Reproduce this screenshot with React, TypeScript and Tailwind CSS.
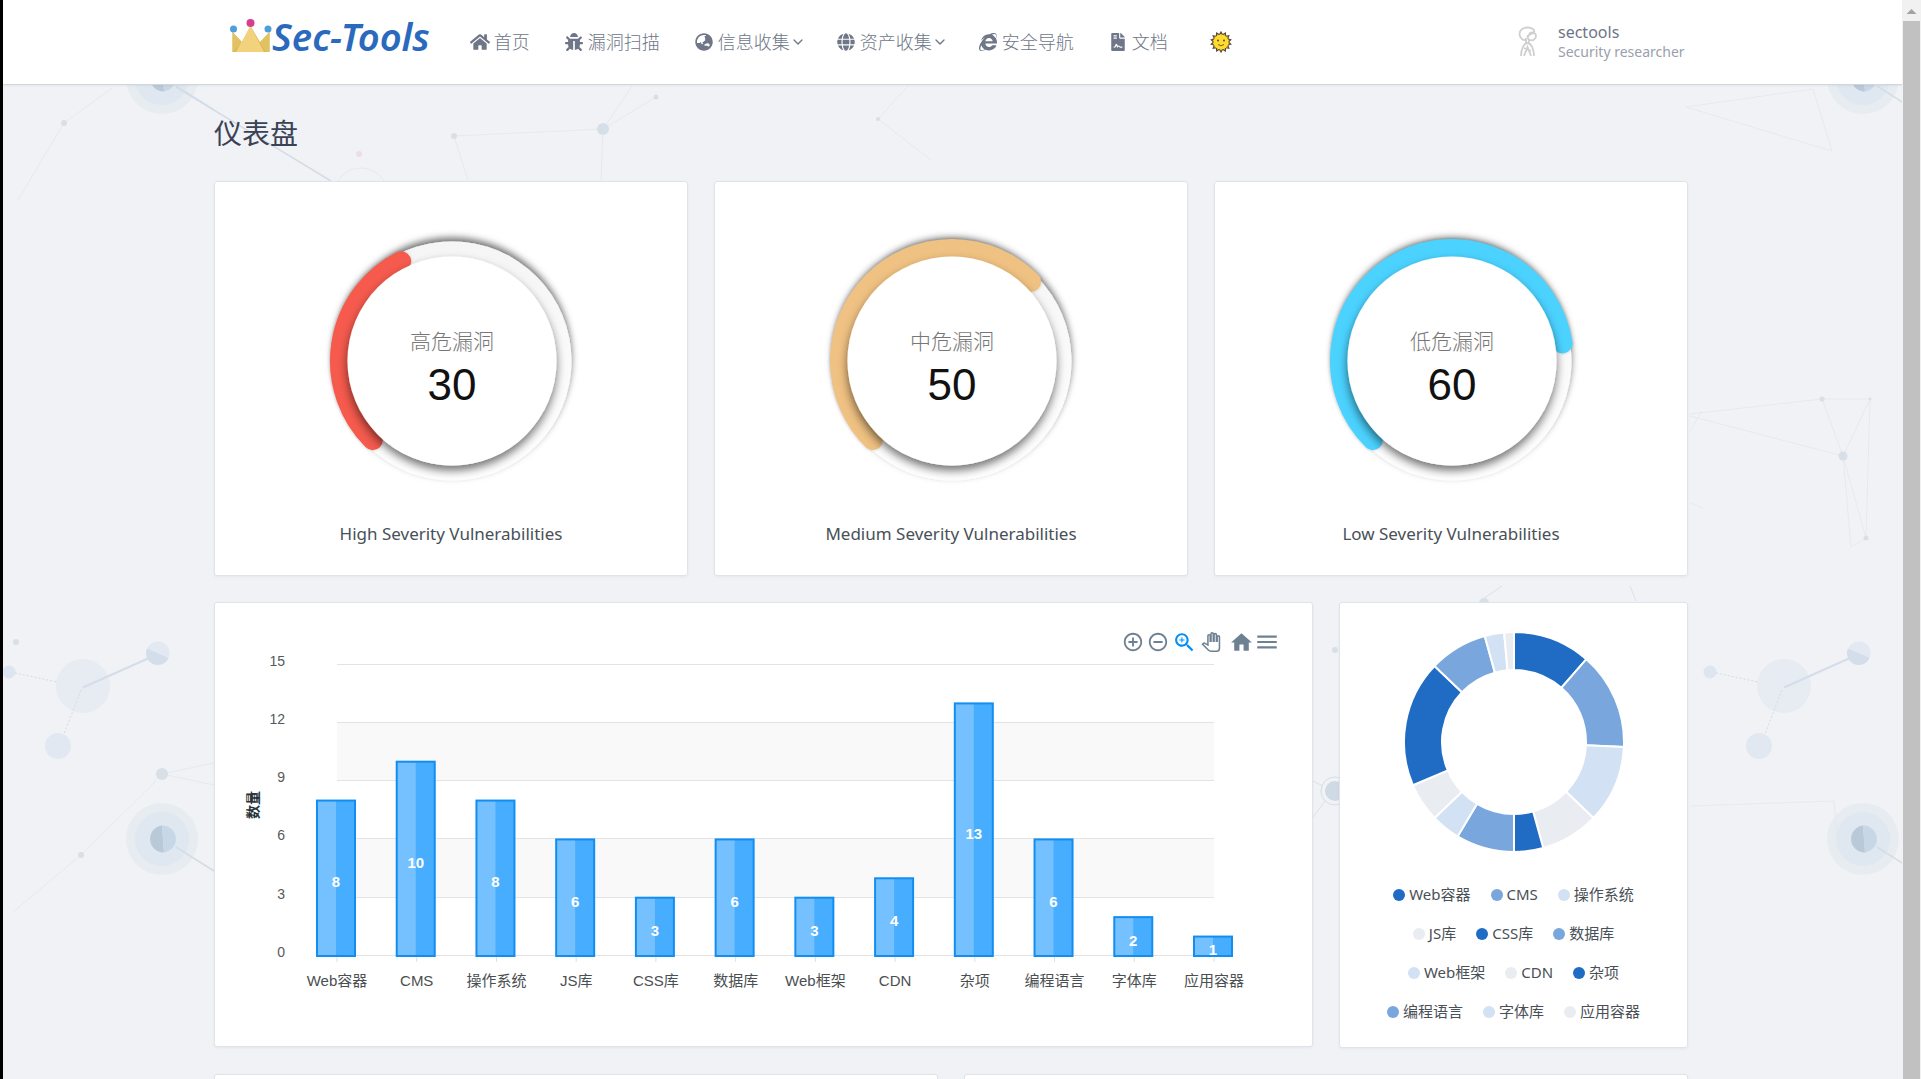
import type { ReactNode } from "react";
import { FaBug, FaFileContract, FaGlobe, FaGlobeAsia, FaHome, FaInternetExplorer } from "react-icons/fa";
import { FiChevronDown } from "react-icons/fi";

const stats = [
  { id: "high", title: "高危漏洞", value: 30, label: "High Severity Vulnerabilities", color: "#f55a4e" },
  { id: "medium", title: "中危漏洞", value: 50, label: "Medium Severity Vulnerabilities", color: "#efc182" },
  { id: "low", title: "低危漏洞", value: 60, label: "Low Severity Vulnerabilities", color: "#4bd2ff" },
];

const components = [
  { name: "Web容器", count: 8 },
  { name: "CMS", count: 10 },
  { name: "操作系统", count: 8 },
  { name: "JS库", count: 6 },
  { name: "CSS库", count: 3 },
  { name: "数据库", count: 6 },
  { name: "Web框架", count: 3 },
  { name: "CDN", count: 4 },
  { name: "杂项", count: 13 },
  { name: "编程语言", count: 6 },
  { name: "字体库", count: 2 },
  { name: "应用容器", count: 1 },
];

const palette = ["#206bc4", "#79a6dc", "#d2e1f3", "#e9ecf1"];

const navItems = [
  { icon: FaHome, label: "首页" },
  { icon: FaBug, label: "漏洞扫描" },
  { icon: FaGlobeAsia, label: "信息收集", menu: true },
  { icon: FaGlobe, label: "资产收集", menu: true },
  { icon: FaInternetExplorer, label: "安全导航" },
  { icon: FaFileContract, label: "文档" },
];

const polar = (cx: number, cy: number, r: number, deg: number) => {
  const a = (deg * Math.PI) / 180;
  return `${(cx + r * Math.sin(a)).toFixed(2)} ${(cy - r * Math.cos(a)).toFixed(2)}`;
};

const Card = ({ className = "", children }: { className?: string; children?: ReactNode }) => (
  <div className={`rounded-[3px] border border-[#dfe4ea] bg-white shadow-[0_1px_3px_rgba(0,0,0,0.05)] ${className}`}>
    {children}
  </div>
);

const RingNode = ({ x, y }: { x: number; y: number }) => (
  <g transform={`translate(${x} ${y})`}>
    <circle r="36" fill="#e7ecf1" />
    <circle r="27" fill="#dfe7f0" />
    <path d="M0-13.500A13.500 13.500 0 0 0 2 13.400Z" fill="#bac9d8" />
    <path d="M0-13.500A13.500 13.500 0 0 1 2 13.400Z" fill="#c8d7e6" />
    <path d="M14 8 52 32" stroke="#d5dce4" strokeWidth="1.500" />
  </g>
);

const Molecule = ({ x, y }: { x: number; y: number }) => (
  <g transform={`translate(${x} ${y})`}>
    <circle r="27" fill="#e7ebf2" />
    <circle cx="-74" cy="-14" r="6.500" fill="#dde5f0" />
    <circle cx="-25" cy="60" r="13" fill="#e2e8f1" />
    <circle cx="75" cy="-33" r="11.500" fill="#e2e9f2" />
    <path d="M64-37.500A11.500 11.500 0 0 0 85.500-28Z" fill="#d3deea" />
    <path d="M0 1.500 66-28" stroke="#d3deea" strokeWidth="2" />
    <path d="M-68-13-26-4M-2 4-19 48" stroke="#d5dae0" strokeDasharray="2 2" />
  </g>
);

const Backdrop = () => (
  <svg className="pointer-events-none absolute left-0 top-0" width="1902" height="1079" fill="none" aria-hidden="true">
    <RingNode x={162} y={78} />
    <path d="M176 87 331 181" stroke="#d3dde7" strokeWidth="1.500" />
    <RingNode x={162} y={839} />
    <RingNode x={1863} y={78} />
    <RingNode x={1863} y={839} />
    <Molecule x={83} y={686} />
    <Molecule x={1784} y={686} />
    <g stroke="#e6e9ee">
      <path d="M112 88 64 123 18 200M454 136 603 129 656 97M454 136 468 180M603 129 601 180M603 129 632 86" />
      <path d="M156 781 81 855 13 912M162 774 214 763M162 774 214 785" />
      <path d="M1686 107 1813 89 1832 151ZM1690 414 1822 399M1690 416 1843 456M1690 503 1703 508" />
      <path d="M1822 399 1870 399 1843 456ZM1843 456 1866 538 1851 547 1843 456M1870 399 1866 538" />
      <path d="M1690 806 1834 801 1838 850M878 119 931 160M878 119 908 86M1690 431 1702 411" />
      <path d="M1313 781 1323 786M1313 817 1325 801M1480 601 1502 586M1630 586 1636 601" stroke="#dbe1e8" />
      <circle cx="361" cy="195" r="27" />
      <circle cx="1335" cy="791" r="14" stroke="#d5dde6" />
    </g>
    <circle cx="1335" cy="791" r="10" fill="#d0dae4" />
    <g fill="#d9dfe6">
      <circle cx="64" cy="123" r="3" />
      <circle cx="454" cy="136" r="3" />
      <circle cx="603" cy="129" r="6" fill="#d6dfe8" />
      <circle cx="656" cy="97" r="2.500" />
      <circle cx="878" cy="119" r="2" />
      <circle cx="359" cy="154" r="3" fill="#f0dde4" />
      <circle cx="16" cy="642" r="3" />
      <circle cx="162" cy="774" r="6" />
      <circle cx="81" cy="855" r="3" />
      <circle cx="1335" cy="650" r="3" />
      <circle cx="1484" cy="603" r="5" />
      <circle cx="1822" cy="399" r="2.500" />
      <circle cx="1870" cy="399" r="1.500" />
      <circle cx="1843" cy="456" r="4.500" />
      <circle cx="1866" cy="538" r="2.500" />
    </g>
  </svg>
);

const Crown = () => (
  <svg width="42" height="34" viewBox="0 0 42 34" aria-hidden="true">
    <path d="M2.500 13 12 23 20.500 7 30 23 39.500 13V33H2.500Z" fill="#dcb957" />
    <path d="M2.500 13 12 24 2.500 33ZM39.500 13 30 24 36 33H39.500Z" fill="#e2c163" />
    <path d="M20.500 7 34 33H6Z" fill="#f2d27c" />
    <circle cx="3.500" cy="10" r="3.500" fill="#4a9fdc" />
    <circle cx="38" cy="10" r="3.500" fill="#4a9fdc" />
    <circle cx="20.500" cy="4" r="4" fill="#d63f8c" />
  </svg>
);

const Sun = () => (
  <svg width="22" height="22" viewBox="0 0 22 22" aria-hidden="true">
    {Array.from({ length: 14 }, (_, i) => (
      <path
        key={i}
        d="M11 1 13 4.500H9Z"
        transform={`rotate(${(i * 360) / 14} 11 11)`}
        fill="#fbc91b"
        stroke="#5b4a3c"
        strokeWidth="1.200"
      />
    ))}
    <circle cx="11" cy="11" r="7.600" fill="#fddc2e" />
    <circle cx="8" cy="9.500" r="1" fill="#5b4a3c" />
    <circle cx="14" cy="9.500" r="1" fill="#5b4a3c" />
    <path d="M8 13.500Q11 16 14 13.500" stroke="#8a5a2a" fill="none" />
  </svg>
);

const Avatar = () => (
  <svg width="20" height="32" viewBox="0 0 20 32" fill="none" stroke="#cfcfcf" strokeWidth="1.800" aria-hidden="true">
    <path d="M9 14C5 15 1.500 12 1.500 8S5 1.500 9.500 1.500 17 4 16 6 10 8 9 11" />
    <path d="M11 8C14 5 18 7 18 10S15 15 12 14 9 10 12 9" />
    <path d="M8 12V17M11 13V17M3 30C3 23 6 17 9.500 17S16 23 16 30M6 30 9.500 21 13 30M6 22 13 25" />
  </svg>
);

const Header = () => (
  <header className="relative border-b border-[#cfd6dc] bg-white shadow-[0_1px_2px_rgba(0,0,0,0.05)]">
    <div className="mx-auto flex h-[84px] max-w-[1474px] items-center">
      <a href="#" className="ml-4 flex items-center pb-3">
        <Crown />
        <span className="font-['Noto_Sans'] text-[38px] leading-10 font-semibold italic text-[#2a69bd]">Sec-Tools</span>
      </a>
      <nav className="ml-10 flex items-center gap-[34px] text-lg leading-6 text-[#6e7687]">
        {navItems.map(({ icon: Icon, label, menu }) => (
          <a key={label} href="#" className="flex items-center gap-1 whitespace-nowrap font-light">
            <Icon className="h-[18px] w-5" />
            {label}
            {menu && <FiChevronDown className="-mx-1 size-4" />}
          </a>
        ))}
        <button type="button" aria-label="主题" className="ml-2">
          <Sun />
        </button>
      </nav>
      <a href="#" className="ml-auto flex items-center gap-5">
        <Avatar />
        <span className="flex min-w-[130px] flex-col">
          <span className="text-base leading-5 text-[#6e7687]">sectools</span>
          <span className="text-sm leading-5 text-[#9aa0ac]">Security researcher</span>
        </span>
      </a>
    </div>
  </header>
);

const Gauge = ({ id, title, value, color }: { id: string; title: string; value: number; color: string }) => {
  const end = -135 + value * 3.6;
  return (
    <svg viewBox="-1 0 270 270" className="w-[270px]" role="img" aria-label={`${title} ${value}`}>
      <defs>
        <linearGradient id={`track-${id}`} x2="0" y2="1">
          <stop offset="0" stopColor="#f5f5f5" />
          <stop offset="1" stopColor="#fff" />
        </linearGradient>
        <filter id={`outer-${id}`} x="-20%" y="-20%" width="140%" height="140%">
          <feDropShadow dx="0" dy="-4" stdDeviation="3.500" floodOpacity="0.550" />
        </filter>
        <filter id={`inner-${id}`} x="-20%" y="-20%" width="140%" height="140%">
          <feDropShadow dx="0" dy="5" stdDeviation="5" floodOpacity="0.550" />
        </filter>
        <filter id={`arc-${id}`} x="-20%" y="-20%" width="140%" height="140%">
          <feDropShadow dx="0" dy="0" stdDeviation="1.500" floodOpacity="0.200" />
        </filter>
      </defs>
      <circle cx="135" cy="135" r="119.500" fill={`url(#track-${id})`} filter={`url(#outer-${id})`} />
      <path
        d={`M${polar(135, 135, 112, -135)}A112 112 0 ${value > 50 ? 1 : 0} 1 ${polar(135, 135, 112, end)}`}
        fill="none"
        stroke={color}
        strokeWidth="20"
        strokeLinecap="round"
        filter={`url(#arc-${id})`}
      />
      <circle cx="135" cy="135" r="104.500" fill="#fff" filter={`url(#inner-${id})`} />
      <text x="135" y="123" textAnchor="middle" fill="#777" className="text-[21px] font-light">
        {title}
      </text>
      <text x="135" y="174" textAnchor="middle" fill="#111" className="font-['Liberation_Sans'] text-[44px]">
        {value}
      </text>
    </svg>
  );
};

const tools = [
  {
    label: "放大",
    path: "M13 7h-2v4H7v2h4v4h2v-4h4v-2h-4V7zm-1-5C6.480 2 2 6.480 2 12s4.480 10 10 10 10-4.480 10-10S17.520 2 12 2zm0 18c-4.410 0-8-3.590-8-8s3.590-8 8-8 8 3.590 8 8-3.590 8-8 8z",
  },
  {
    label: "缩小",
    path: "M7 11v2h10v-2H7zm5-9C6.480 2 2 6.480 2 12s4.480 10 10 10 10-4.480 10-10S17.520 2 12 2zm0 18c-4.410 0-8-3.590-8-8s3.590-8 8-8 8 3.590 8 8-3.590 8-8 8z",
  },
];

const Toolbar = () => (
  <div className="flex h-[22px] items-center justify-end pr-8 text-[#6e8192]">
    {tools.map((tool) => (
      <button key={tool.label} type="button" aria-label={tool.label} className="mr-[3px]">
        <svg width="22" height="22" viewBox="0 0 24 24" fill="currentColor">
          <path d={tool.path} />
        </svg>
      </button>
    ))}
    <button type="button" aria-label="选区缩放" className="mr-1 text-[#008ffb]">
      <svg width="25" height="25" viewBox="0 0 24 24" fill="currentColor">
        <path d="M15.500 14h-.790l-.280-.270C15.410 12.590 16 11.110 16 9.500 16 5.910 13.090 3 9.500 3S3 5.910 3 9.500 5.910 16 9.500 16c1.610 0 3.090-.590 4.230-1.570l.270.280v.790l5 4.990L20.490 19l-4.990-5zm-6 0C7.010 14 5 11.990 5 9.500S7.010 5 9.500 5 14 7.010 14 9.500 11.990 14 9.500 14z" />
        <path d="M12 10h-2v2H9v-2H7V9h2V7h1v2h2v1z" />
      </svg>
    </button>
    <button type="button" aria-label="平移" className="mr-2">
      <svg width="20" height="20" viewBox="-1 -1 26 26" fill="#fff" stroke="currentColor" strokeWidth="2">
        <path d="M23 5.500V20c0 2.200-1.800 4-4 4h-7.300c-1.080 0-2.100-.430-2.850-1.190L1 14.830s1.260-1.230 1.300-1.250c.220-.190.490-.290.790-.290.220 0 .420.060.6.160.040.010 4.310 2.460 4.310 2.460V4c0-.830.670-1.500 1.500-1.500S11 3.170 11 4v7h1V1.500c0-.830.670-1.500 1.500-1.500S15 .670 15 1.500V11h1V2.500c0-.830.670-1.500 1.500-1.500s1.500.670 1.500 1.500V11h1V5.500c0-.830.670-1.500 1.500-1.500s1.500.670 1.500 1.500z" />
      </svg>
    </button>
    <button type="button" aria-label="重置">
      <svg width="25" height="25" viewBox="0 0 24 24" fill="currentColor">
        <path d="M10 20v-6h4v6h5v-8h3L12 3 2 12h3v8z" />
      </svg>
    </button>
    <button type="button" aria-label="菜单">
      <svg width="26" height="26" viewBox="0 0 24 24" fill="currentColor">
        <path d="M3 18h18v-2H3v2zm0-5h18v-2H3v2zm0-7v2h18V6H3z" />
      </svg>
    </button>
  </div>
);

// plot area of the bar chart, in viewBox units
const plot = { left: 122, right: 999, base: 302, unit: 19.43 };
const step = (plot.right - plot.left) / (components.length - 1);

const BarChart = () => (
  <svg viewBox="0 0 1097 393" className="w-full font-['Liberation_Sans','Noto_Sans_CJK_SC',sans-serif]" role="img" aria-label="数量">
    {[12, 6].map((v) => (
      <rect
        key={v}
        x={plot.left}
        y={plot.base - v * plot.unit}
        width={plot.right - plot.left}
        height={3 * plot.unit}
        fill="#f9f9f9"
      />
    ))}
    {[15, 12, 9, 6, 3, 0].map((v) => {
      const y = Math.round(plot.base - v * plot.unit);
      return (
        <g key={v}>
          <path d={`M${plot.left} ${y + 0.5}H${plot.right}`} stroke="#e3e3e3" />
          <text x="70" y={y + 2} textAnchor="end" fill="#55595c" className="text-sm">
            {v}
          </text>
        </g>
      );
    })}
    <text transform="translate(43 152) rotate(-90)" textAnchor="middle" fill="#263238" className="text-sm font-bold">
      数量
    </text>
    {components.map(({ name, count }, i) => {
      const x = plot.left + i * step;
      const h = count * plot.unit;
      const y = plot.base + 1 - h;
      return (
        <g key={name}>
          <path d={`M${x} ${plot.base}v7`} stroke="#dfdfdf" />
          <rect x={x - 20} y={y} width="38" height={h} fill="#46adff" />
          <rect x={x - 20} y={y} width="19" height={h} fill="#75c1ff" />
          <rect x={x - 20} y={y} width="38" height={h} fill="none" stroke="#128ef2" strokeWidth="2" />
          <text x={x - 1} y={y + h / 2 + 9} textAnchor="middle" fill="#fff" className="text-[15px] font-bold">
            {count}
          </text>
          <text x={x} y={plot.base + 31} textAnchor="middle" fill="#4a4f52" className="text-[15px]">
            {name}
          </text>
        </g>
      );
    })}
  </svg>
);

const Donut = () => {
  const total = components.reduce((sum, c) => sum + c.count, 0);
  let angle = 0;
  return (
    <svg viewBox="0 0 222 222" className="w-[222px]" role="img" aria-label="组件分布">
      {components.map(({ name, count }, i) => {
        const start = angle;
        angle += (count / total) * 360;
        return (
          <path
            key={name}
            d={`M${polar(111, 111, 110, start)}A110 110 0 0 1 ${polar(111, 111, 110, angle)}L${polar(111, 111, 72, angle)}A72 72 0 0 0 ${polar(111, 111, 72, start)}Z`}
            fill={palette[i % 4]}
            stroke="#fff"
            strokeWidth="2"
          />
        );
      })}
    </svg>
  );
};

const App = () => {
  return (
    <div className="relative flex h-screen overflow-hidden bg-[#f0f2f6] font-['Noto_Sans','Noto_Sans_CJK_SC',sans-serif]">
      <div className="relative flex-1 overflow-hidden">
        <Backdrop />
        <Header />
        <main className="relative mx-auto max-w-[1474px] pt-7">
          <h1 className="mb-7 text-[28px] leading-10 text-[#3a4255]">仪表盘</h1>
          <div className="grid grid-cols-3 gap-[26px]">
            {stats.map(({ label, ...gauge }) => (
              <Card key={gauge.id} className="flex h-[395px] flex-col items-center pt-11">
                <Gauge {...gauge} />
                <h2 className="mt-[26px] text-[17px] leading-6 text-[#495057]">{label}</h2>
              </Card>
            ))}
          </div>
          <div className="mt-[26px] flex items-start gap-[26px]">
            <Card className="min-w-0 flex-1 pt-7">
              <Toolbar />
              <BarChart />
            </Card>
            <Card className="flex w-[349px] flex-col items-center pt-7 pb-4">
              <Donut />
              <ul className="mt-[22px] flex max-w-[280px] flex-wrap justify-center gap-x-5 text-[15px] leading-[39px] text-[#495057]">
                {components.map(({ name }, i) => (
                  <li key={name} className="flex items-center gap-1">
                    <span className="size-3 rounded-full" style={{ backgroundColor: palette[i % 4] }} />
                    {name}
                  </li>
                ))}
              </ul>
            </Card>
          </div>
          <div className="mt-[26px] flex gap-[26px]">
            <Card className="h-40 w-[724px]" />
            <Card className="h-40 flex-1" />
          </div>
        </main>
        <div className="absolute inset-y-0 left-0 w-[3px] bg-black" />
      </div>
      <div className="flex w-[19px] flex-col items-center bg-[#f1f1f1]">
        <svg width="19" height="21" viewBox="0 0 19 21" aria-hidden="true">
          <path d="M4.500 14 9.500 9 14.500 14Z" fill="#a3a3a3" />
        </svg>
        <div className="w-[17px] flex-1 bg-[#c1c1c1]" />
      </div>
    </div>
  );
};

export default App;
